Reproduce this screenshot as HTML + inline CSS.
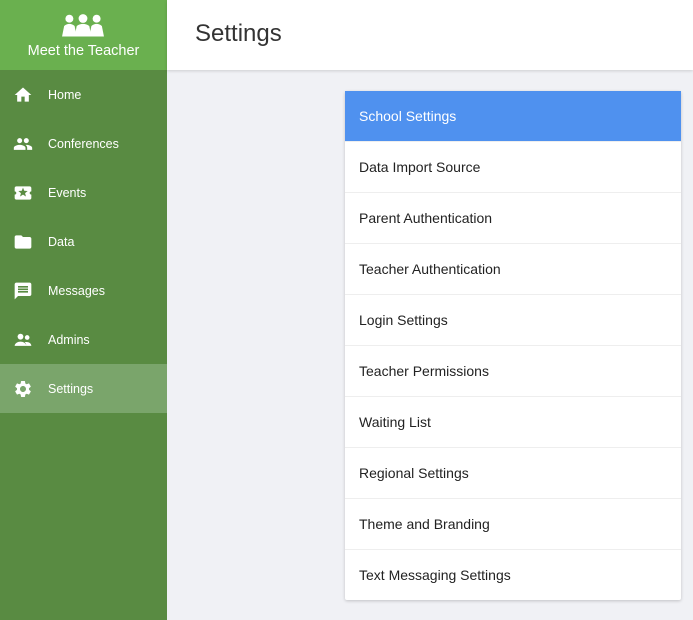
<!DOCTYPE html>
<html><head><style>
*{margin:0;padding:0;box-sizing:border-box}
body{width:693px;height:620px;overflow:hidden;font-family:"Liberation Sans",Arial,sans-serif;background:#f0f1f5;position:relative}
#side{position:absolute;left:0;top:0;width:167px;height:620px;background:#598b42}
#logo{height:70px;background:#6ab04f;color:#fff;text-align:center}
#logo .t{font-size:14.5px;position:absolute;top:43px;left:0;width:167px}
.nav{height:49px;display:flex;align-items:center;color:#fff;font-size:12.5px}
.nav svg{width:20px;height:20px;margin:0 15px 0 13px;fill:#fff}
.nav.act{background:#7aa56b}
#top{position:absolute;left:167px;top:0;right:0;height:70px;background:#fff;box-shadow:0 1px 3px rgba(0,0,0,.15)}
#top h1{font-weight:normal;font-size:24px;color:#333;position:absolute;left:28px;top:20px}
#card{position:absolute;left:345px;top:91px;width:336px;background:#fff;box-shadow:0 1px 3px rgba(0,0,0,.2);border-radius:2px}
.row{height:51px;border-top:1px solid #eee;padding-left:14px;display:flex;align-items:center;font-size:14px;color:#222}
.row.first{background:#4f91ef;color:#fff;border-top:none;height:50px}
</style></head><body>
<div id="side">
<div id="logo">
<svg style="position:absolute;left:61px;top:14px" width="44" height="23" viewBox="0 0 42 21" fill="#fff">
<circle cx="8" cy="4" r="3.8"/><circle cx="21" cy="3.8" r="4.2"/><circle cx="34" cy="4" r="3.8"/>
<path d="M1 21 L3 11 Q8 7 13 11 L15 21Z"/><path d="M13 21 L15 11 Q21 7 27 11 L29 21Z"/><path d="M27 21 L29 11 Q34 7 39 11 L41 21Z"/>
</svg>
<div class="t">Meet the Teacher</div></div>
<div class="nav"><svg viewBox="0 0 24 24"><path d="M10 20v-6h4v6h5v-8h3L12 3 2 12h3v8z"/></svg>Home</div>
<div class="nav"><svg viewBox="0 0 24 24"><path d="M16 11c1.66 0 2.99-1.34 2.99-3S17.66 5 16 5c-1.66 0-3 1.34-3 3s1.34 3 3 3zm-8 0c1.66 0 2.99-1.34 2.99-3S9.66 5 8 5C6.34 5 5 6.34 5 8s1.34 3 3 3zm0 2c-2.33 0-7 1.170-7 3.5V19h14v-2.5c0-2.33-4.67-3.5-7-3.5zm8 0c-.29 0-.62.02-.97.05 1.16.84 1.97 1.97 1.97 3.45V19h6v-2.5c0-2.33-4.67-3.5-7-3.5z"/></svg>Conferences</div>
<div class="nav"><svg viewBox="0 0 24 24"><path d="M22 10V6c0-1.1-.9-2-2-2H4c-1.1 0-2 .9-2 2v4c1.1 0 2 .9 2 2s-.9 2-2 2v4c0 1.1.9 2 2 2h16c1.1 0 2-.9 2-2v-4c-1.1 0-2-.9-2-2s.9-2 2-2zm-6.5 6.2L12 14l-3.5 2.2 1-4-3.1-2.6 4.1-.3L12 5.5l1.5 3.8 4.1.3-3.1 2.6z"/></svg>Events</div>
<div class="nav"><svg viewBox="0 0 24 24"><path d="M10 4H4c-1.1 0-2 .9-2 2v12c0 1.1.9 2 2 2h16c1.1 0 2-.9 2-2V8c0-1.1-.9-2-2-2h-8l-2-2z"/></svg>Data</div>
<div class="nav"><svg viewBox="0 0 24 24"><path d="M20 2H4c-1.1 0-2 .9-2 2v18l4-4h14c1.1 0 2-.9 2-2V4c0-1.1-.9-2-2-2zM18 14H6v-2h12v2zm0-3H6V9h12v2zm0-3H6V6h12v2z"/></svg>Messages</div>
<div class="nav"><svg viewBox="0 0 24 24"><circle cx="9" cy="8" r="3.5"/><circle cx="17" cy="9" r="2.8"/><path d="M2 19c0-3 4-5 7-5s7 2 7 5zM16 19c0-2-1-3.5-2-4.3 4-1 8 .8 8 4.3z"/></svg>Admins</div>
<div class="nav act"><svg viewBox="0 0 24 24"><path d="M19.14 12.94c.04-.3.06-.61.06-.94 0-.32-.02-.64-.07-.94l2.030-1.58a.49.49 0 0 0 .12-.61l-1.92-3.32a.488.488 0 0 0-.59-.22l-2.39.96c-.5-.38-1.03-.7-1.62-.94l-.36-2.54a.484.484 0 0 0-.48-.41h-3.84c-.24 0-.43.17-.47.41l-.36 2.54c-.59.24-1.13.57-1.62.94l-2.39-.96c-.22-.08-.47 0-.59.22L2.74 8.87c-.12.21-.08.47.12.61l2.03 1.58c-.05.3-.09.63-.09.94s.02.64.07.94l-2.03 1.58a.49.49 0 0 0-.12.61l1.92 3.32c.12.22.37.29.59.22l2.39-.96c.5.38 1.03.7 1.62.94l.36 2.54c.05.24.24.41.48.41h3.84c.24 0 .44-.17.47-.41l.36-2.54c.59-.24 1.13-.56 1.62-.94l2.39.96c.22.08.47 0 .59-.22l1.92-3.32c.12-.22.07-.47-.12-.61l-2.01-1.58zM12 15.6c-1.98 0-3.6-1.62-3.6-3.6s1.62-3.6 3.6-3.6 3.6 1.62 3.6 3.6-1.62 3.6-3.6 3.6z"/></svg>Settings</div>
</div>
<div id="top"><h1>Settings</h1></div>
<div id="card">
<div class="row first">School Settings</div>
<div class="row">Data Import Source</div>
<div class="row">Parent Authentication</div>
<div class="row">Teacher Authentication</div>
<div class="row">Login Settings</div>
<div class="row">Teacher Permissions</div>
<div class="row">Waiting List</div>
<div class="row">Regional Settings</div>
<div class="row">Theme and Branding</div>
<div class="row">Text Messaging Settings</div>
</div>
</body></html>
